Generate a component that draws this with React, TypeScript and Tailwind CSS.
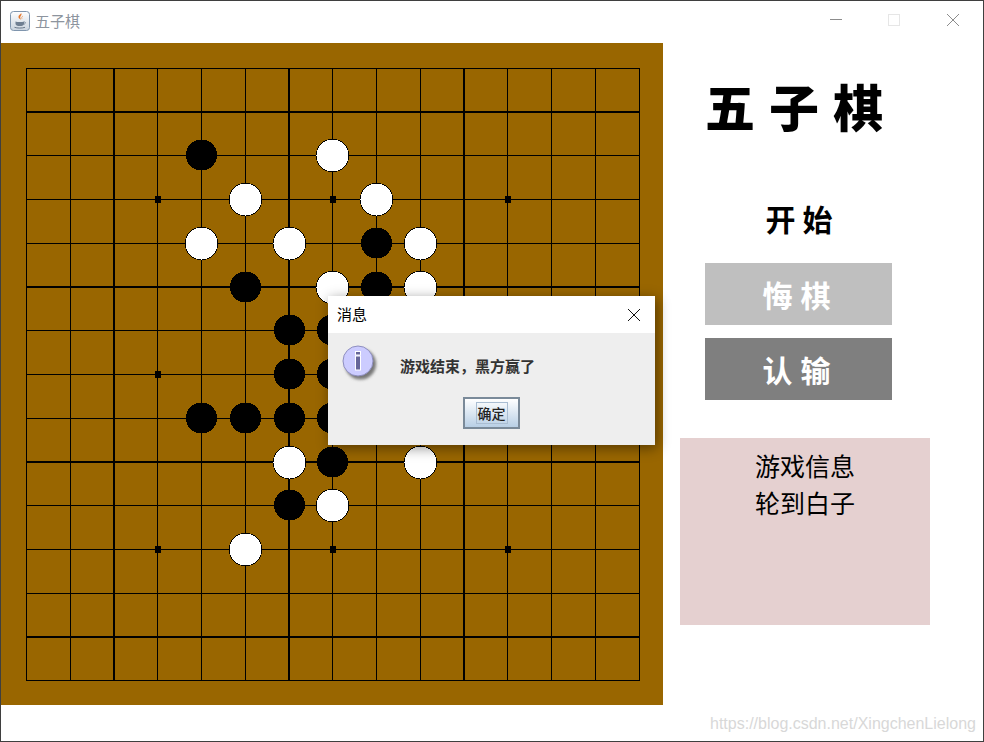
const colPos = (i: number) => Math.round(25 + 43.75 * i)
// rows round the .5 case down, unlike the columns
const rowPos = (i: number) => Math.round(24.99 + 43.75 * i)

const thickCols = [2, 6, 10]
const thickRows = [1, 5, 9, 13]
const starPoints = [3, 7, 11]

// [col, row] of every stone on the board
const blackStones = [
  [4, 2], [8, 4], [5, 5], [8, 5], [6, 6], [7, 6], [6, 7], [7, 7],
  [4, 8], [5, 8], [6, 8], [7, 8], [7, 9], [6, 10],
]
const whiteStones = [
  [7, 2], [5, 3], [8, 3], [4, 4], [6, 4], [9, 4], [7, 5], [9, 5],
  [6, 9], [9, 9], [7, 10], [5, 11],
]

function Board() {
  const ticks = Array.from({ length: 15 }, (_, i) => i)
  return (
    <svg width="662" height="662" viewBox="0 0 662 662" className="block">
      <g fill="#000" shapeRendering="crispEdges">
        {ticks.map(i => {
          const x = colPos(i)
          const thick = thickCols.includes(i)
          return <rect key={i} x={thick ? x - 1 : x} y={25} width={thick ? 2 : 1} height={613} />
        })}
        {ticks.map(i => {
          const y = rowPos(i)
          const thick = thickRows.includes(i)
          return <rect key={i} x={25} y={thick ? y - 1 : y} width={613} height={thick ? 2 : 1} />
        })}
        {starPoints.map(c =>
          starPoints.map(r => (
            <rect key={`${c}-${r}`} x={colPos(c) - 2} y={rowPos(r) - 3} width={6} height={7} />
          )),
        )}
      </g>
      <g shapeRendering="crispEdges">
        {blackStones.map(([c, r]) => (
          <circle key={`b${c}-${r}`} cx={colPos(c) + 0.5} cy={rowPos(r)} r={15.5} fill="#000" />
        ))}
        {whiteStones.map(([c, r]) => (
          <g key={`w${c}-${r}`}>
            <circle cx={colPos(c) + 0.5} cy={rowPos(r) + 0.5} r={16.8} fill="#000" />
            <circle cx={colPos(c) + 0.5} cy={rowPos(r) + 0.5} r={16} fill="#fff" />
          </g>
        ))}
      </g>
    </svg>
  )
}

function JavaIcon() {
  return (
    <svg width="20" height="20" viewBox="0 0 20 20" className="shrink-0">
      <defs>
        <linearGradient id="javaBg" x1="0" y1="0" x2="0" y2="1">
          <stop offset="0" stopColor="#ffffff" />
          <stop offset="1" stopColor="#c9d3de" />
        </linearGradient>
      </defs>
      <rect x="0.5" y="0.5" width="19" height="19" rx="3" fill="url(#javaBg)" stroke="#7f95ad" />
      <path d="M11 2c1.8 2-1.4 3-.7 5 .2.7.7 1.2 1 1.8-2-.9-3.4-2.2-2.7-3.8.5-1.1 2.3-1.6 2.4-3z" fill="#e4762b" />
      <path d="M13 5c-1.2.8-1.8 1.5-1 2.8" fill="none" stroke="#eda46b" strokeWidth="0.9" />
      <path d="M5.5 10.5c1.5.8 7 .8 8.5 0v2.2c0 1.6-1.7 2.3-4.2 2.3s-4.3-.7-4.3-2.3z" fill="#6f7f92" />
      <path d="M14 11c1.8-.4 2.2 1.6-.3 2.4" fill="none" stroke="#6f7f92" strokeWidth="0.8" />
      <path d="M4.5 16.3c2.5 1 8 1 10.5 0" fill="none" stroke="#5d6d80" strokeWidth="0.9" />
    </svg>
  )
}

function WindowControls() {
  return (
    <svg width="130" height="14" viewBox="0 0 130 14" className="block" fill="none">
      <path d="M0 6.5h12" stroke="#8c8c8c" />
      <rect x="58.5" y="1.5" width="11" height="11" stroke="#e6e6e6" />
      <path d="M117 1l12 12M129 1l-12 12" stroke="#8c8c8c" />
    </svg>
  )
}

function InfoIcon() {
  return (
    <svg width="40" height="40" viewBox="0 0 40 40" className="shrink-0 block">
      <defs>
        <filter id="iconShadow" x="-30%" y="-30%" width="160%" height="160%">
          <feGaussianBlur stdDeviation="1.6" />
        </filter>
      </defs>
      <circle cx="18.5" cy="19" r="15.5" fill="#777" filter="url(#iconShadow)" />
      <circle cx="16" cy="16" r="15" fill="#ccccff" stroke="#8f8fc0" />
      <rect x="13.5" y="6.5" width="5" height="3.5" fill="#666699" stroke="#fff" />
      <rect x="13.5" y="11" width="5" height="14" fill="#666699" stroke="#fff" />
    </svg>
  )
}

function MessageDialog() {
  return (
    <div className="absolute left-[327px] top-[295px] w-[327px] h-[149px] flex flex-col shadow-[2px_3px_12px_rgba(0,0,0,0.45)] bg-[#eeeeee]">
      <div className="h-[37px] bg-white flex items-center justify-between pl-[9px] pr-[15px]">
        <span className="text-[15px] leading-[20px] pb-[2px] text-black">消息</span>
        <svg width="12" height="12" viewBox="0 0 12 12" fill="none" className="block">
          <path d="M0 0l12 12M12 0L0 12" stroke="#111" />
        </svg>
      </div>
      <div className="flex-1 flex flex-col">
        <div className="flex items-start pl-[14px] pt-[12px] h-[64px]">
          <InfoIcon />
          <span className="ml-[18px] mt-[12px] text-[15px] font-semibold text-[#333333] leading-[18px] whitespace-nowrap">
            游戏结束，黑方赢了
          </span>
        </div>
        <div className="flex justify-center">
          <button className="w-[57px] h-[32px] border-2 border-[#7a8a99] bg-gradient-to-b from-white to-[#b8cfe5] flex items-center justify-center">
            <span className="border border-[#a9bdd2] px-[1px] h-[22px] leading-[20px] text-[14px] font-medium text-[#222]">确定</span>
          </button>
        </div>
      </div>
    </div>
  )
}

function SideButton({ label, color }: { label: string; color: string }) {
  return (
    <div className={`w-[187px] h-[62px] flex items-center justify-center text-white text-[30px] font-bold tracking-[8px] indent-[4px] ${color}`}>
      {label}
    </div>
  )
}

export default function App() {
  return (
    <div className="relative w-[984px] h-[742px] overflow-hidden bg-white border border-[#3f3f3f] font-['Noto_Sans_CJK_SC',sans-serif]">
      {/* 标题栏 */}
      <div className="h-[42px] flex items-center justify-between pl-[9px] pr-[23px]">
        <div className="flex items-center gap-[5px] pb-[2px]">
          <JavaIcon />
          <span className="text-[15px] leading-[20px] text-[#8d949e]">五子棋</span>
        </div>
        <div className="pb-[4px]">
          <WindowControls />
        </div>
      </div>

      <div className="flex">
        <div className="w-[662px] h-[662px] bg-[#996600] shrink-0">
          <Board />
        </div>

        {/* 右侧面板 */}
        <div className="flex-1 flex flex-col">
          <div className="h-[97px] ml-[17px] w-[228px] flex items-end justify-center text-[50px] leading-[70px] font-black text-black tracking-[14px] indent-[14px]">
            五子棋
          </div>
          <div className="mt-[56px] h-[44px] ml-[17px] w-[238px] flex items-center justify-center text-[30px] font-bold text-black tracking-[7px] indent-[7px]">
            开始
          </div>
          <div className="mt-[23px] ml-[42px] flex flex-col gap-[13px]">
            <SideButton label="悔棋" color="bg-[#bfbfbf]" />
            <SideButton label="认输" color="bg-[#7f7f7f]" />
          </div>
          <div className="mt-[38px] ml-[17px] w-[250px] h-[187px] bg-[#e5d0d0] pt-[9px] flex flex-col items-center text-[25px] leading-[37px] text-black">
            <span>游戏信息</span>
            <span>轮到白子</span>
          </div>
        </div>
      </div>

      <MessageDialog />

      <span className="absolute left-[709px] top-[713px] text-[16px] leading-[20px] text-[#d8d8d8] font-['Liberation_Sans',sans-serif]">
        https://blog.csdn.net/XingchenLielong
      </span>
    </div>
  )
}
